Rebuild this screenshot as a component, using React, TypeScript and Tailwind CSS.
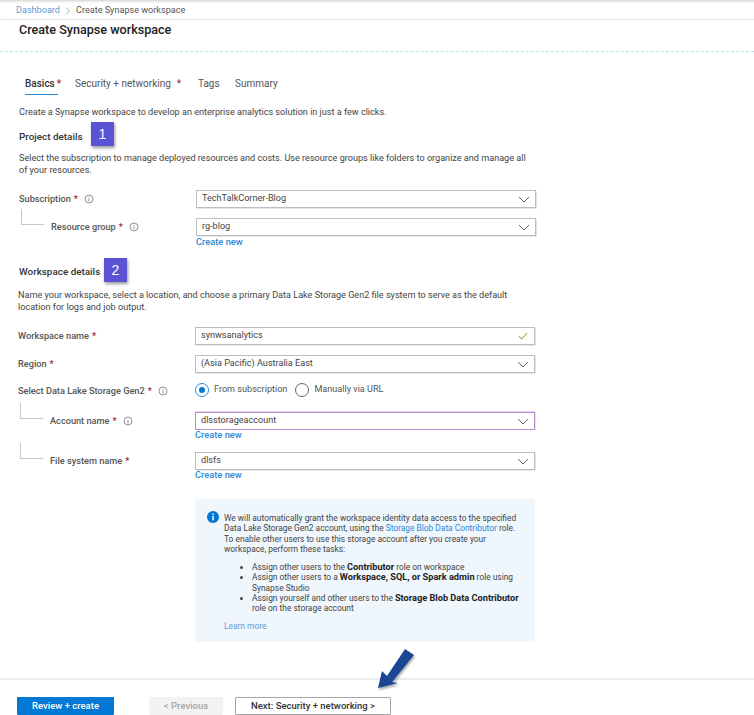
import React from "react";

const Chevron = () => (
  <svg width="12" height="7" viewBox="0 0 12 7" fill="none" className="shrink-0">
    <path d="M1 1l5 5 5-5" stroke="#555" strokeWidth="0.9" />
  </svg>
);

const Info = ({ className = "" }: { className?: string }) => (
  <svg width="10" height="10" viewBox="0 0 10 10" fill="none" className={className}>
    <circle cx="5" cy="5" r="4" stroke="#777" strokeWidth="0.8" />
    <path d="M5 4.4v3M5 2.6v.9" stroke="#777" strokeWidth="0.8" />
  </svg>
);

const Star = () => <span className="text-[#a4262c] ml-[3px]">*</span>;

function Select({ value, tone = "normal", icon = "chevron" }: { value: string; tone?: "normal" | "focus"; icon?: "chevron" | "check" }) {
  return (
    <div
      className={
        "w-[340px] h-[18px] flex items-center justify-between pl-[5px] pr-[5px] bg-white text-[9.1px] text-[#444] border " +
        (tone === "focus"
          ? "border-[#b78fcb] shadow-[0_-1px_0_#e8d5ee,1px_0_0_#efe3f3]"
          : "border-[#bdbdbd] shadow-[1px_1px_0_#e6e6e6]")
      }
    >
      <span>{value}</span>
      {icon === "chevron" ? (
        <Chevron />
      ) : (
        <svg width="10" height="8" viewBox="0 0 10 8" fill="none" className="mr-[1px]">
          <path d="M1 4l2.6 3L9 1" stroke="#8db34f" strokeWidth="1.1" />
        </svg>
      )}
    </div>
  );
}

const Tree = () => <div className="absolute left-[2px] top-[-9px] w-[23px] h-[16px] border-l border-b border-[#c8c8c8]" />;

function Row({ label, sub, info, children, top, left = 18 }: { label: string; sub?: boolean; info?: boolean; children: React.ReactNode; top: number; left?: number }) {
  return (
    <div className="flex items-center h-[18px]" style={{ marginTop: top, marginLeft: left }}>
      <div className="relative h-full flex items-center font-medium text-[9.2px] text-[#555] shrink-0" style={{ width: 195 - left }}>
        {sub && <Tree />}
        <span className={sub ? "ml-[32px]" : ""}>{label}</span>
        <Star />
        {info && <Info className="ml-[6px]" />}
      </div>
      {children}
    </div>
  );
}

const CreateNew = ({ top, left = 195 }: { top: number; left?: number }) => (
  <div className="text-[9.3px] leading-[12px] font-medium text-[#2b88d8]" style={{ marginTop: top, marginLeft: left }}>
    Create new
  </div>
);

const Badge = ({ n, className }: { n: string; className: string }) => (
  <div className={"absolute w-[23px] h-[24px] bg-[#5b53d6] text-white text-[14px] flex items-center justify-center shadow-[1px_2px_3px_rgba(0,0,0,0.4)] font-['Liberation_Sans',sans-serif] " + className}>
    {n}
  </div>
);

export default function App() {
  return (
    <div className="relative w-[754px] h-[715px] overflow-hidden bg-white font-['Roboto',sans-serif] text-[#444]">
      <header className="h-[20px] border-b border-[#e5e5e5] flex items-center pl-[16px] pt-[2px] text-[9.1px] shadow-[inset_0_3px_3px_-2px_rgba(0,0,0,0.2)]">
        <span className="text-[#5b9bd5]">Dashboard</span>
        <svg width="6" height="8" viewBox="0 0 6 8" fill="none" className="mx-[5px]">
          <path d="M1 .5L4.5 4 1 7.5" stroke="#999" strokeWidth="0.8" />
        </svg>
        <span className="text-[#555]">Create Synapse workspace</span>
      </header>

      <h1 className="ml-[19px] mt-0 h-[20px] leading-[20px] text-[12.6px] font-medium text-[#222]">Create Synapse workspace</h1>
      <div className="mt-[11px] border-t border-dashed border-[#b6e3ee]" />

      <nav className="flex ml-[25px] mt-[24px] h-[19px] text-[10px] text-[#555] relative">
        <div className="w-[50px] font-medium text-[#333]">
          Basics<span className="text-[#a4262c] ml-[2px]">*</span>
        </div>
        <div className="w-[123px]">
          Security + networking<span className="text-[#a4262c] ml-[6px]">*</span>
        </div>
        <div className="w-[37px]">Tags</div>
        <div>Summary</div>
        <div className="absolute left-0 top-[18px] w-[33px] h-[1px] bg-[#2b88d8]" />
      </nav>

      <p className="ml-[19px] mt-[9px] h-[16px] leading-[16px] text-[9.1px]">Create a Synapse workspace to develop an enterprise analytics solution in just a few clicks.</p>

      <h2 className="ml-[19px] mt-[9px] h-[16px] leading-[16px] text-[9.9px] font-medium text-[#333]">Project details</h2>
      <div className="ml-[19px] mt-[7px] w-[515px] text-[9.1px] leading-[12px]">
        Select the subscription to manage deployed resources and costs. Use resource groups like folders to organize and manage all of your resources.
      </div>

      <Row label="Subscription" info top={14} left={19}>
        <div className="ml-[1px]"><Select value="TechTalkCorner-Blog" /></div>
      </Row>
      <Row label="Resource group" sub info top={10} left={19}>
        <div className="ml-[1px]"><Select value="rg-blog" /></div>
      </Row>
      <CreateNew top={0} left={196} />

      <h2 className="ml-[19px] mt-[16px] h-[16px] leading-[16px] text-[9.9px] font-medium text-[#333]">Workspace details</h2>
      <div className="ml-[18px] mt-[9px] w-[515px] text-[9.1px] leading-[12px]">
        Name your workspace, select a location, and choose a primary Data Lake Storage Gen2 file system to serve as the default location for logs and job output.
      </div>

      <Row label="Workspace name" top={14}>
        <Select value="synwsanalytics" icon="check" />
      </Row>
      <Row label="Region" top={10}>
        <Select value="(Asia Pacific) Australia East" />
      </Row>
      <Row label="Select Data Lake Storage Gen2" info top={9}>
        <div className="flex items-center text-[9.1px] text-[#555] -mt-[3px]">
          <div className="w-[14px] h-[14px] rounded-full border border-[#2b88d8] flex items-center justify-center">
            <div className="w-[6px] h-[6px] rounded-full bg-[#0078d4]" />
          </div>
          <span className="ml-[5px]">From subscription</span>
          <div className="ml-[8px] w-[14px] h-[14px] rounded-full border border-[#666]" />
          <span className="ml-[5px]">Manually via URL</span>
        </div>
      </Row>
      <Row label="Account name" sub info top={12}>
        <Select value="dlsstorageaccount" tone="focus" />
      </Row>
      <CreateNew top={-1} />
      <Row label="File system name" sub top={11}>
        <Select value="dlsfs" />
      </Row>
      <CreateNew top={-1} />

      <section className="ml-[195px] mt-[18px] w-[340px] h-[143px] bg-[#eff6fc] flex pl-[12px] pt-[12px] text-[8.4px] leading-[10.3px] text-[#444]">
        <svg width="12" height="12" viewBox="0 0 12 12" className="shrink-0">
          <circle cx="6" cy="6" r="6" fill="#0078d4" />
          <rect x="5.3" y="5" width="1.5" height="4.4" fill="#fff" />
          <rect x="5.3" y="2.6" width="1.5" height="1.5" fill="#fff" />
        </svg>
        <div className="ml-[5px] mt-[2px] w-[298px]">
          <p>
            We will automatically grant the workspace identity data access to the specified Data Lake Storage Gen2 account, using the{" "}
            <span className="text-[#2b88d8]">Storage Blob Data Contributor</span> role. To enable other users to use this storage account after you create your workspace, perform these tasks:
          </p>
          <ul className="list-disc ml-[28px] mt-[8px] w-[272px]">
            <li>Assign other users to the <b className="text-[9.2px] text-[#222]">Contributor</b> role on workspace</li>
            <li>Assign other users to a <b className="text-[9.2px] text-[#222]">Workspace, SQL, or Spark admin</b> role using Synapse Studio</li>
            <li>Assign yourself and other users to the <b className="text-[9.2px] text-[#222]">Storage Blob Data Contributor</b> role on the storage account</li>
          </ul>
          <p className="mt-[7px] text-[#5b9bd5]">Learn more</p>
        </div>
      </section>

      <footer className="mt-[36px] border-t-2 border-[#ececec] h-[37px] flex items-start pt-[17px] pl-[17px] text-[9.5px] font-medium">
        <button className="w-[97px] h-[18px] bg-[#0078d4] text-white rounded-[1px]">Review + create</button>
        <button className="ml-[35px] w-[74px] h-[18px] bg-[#f3f2f1] text-[#a6a6a6] rounded-[1px]">&lt; Previous</button>
        <button className="ml-[12px] w-[156px] h-[18px] bg-white border border-[#a8a6a4] text-[#333] rounded-[1px]">Next: Security + networking &gt;</button>
      </footer>

      <Badge n="1" className="left-[91px] top-[122px]" />
      <Badge n="2" className="left-[104px] top-[258px]" />

      <svg className="absolute left-[370px] top-[645px] drop-shadow-[1px_2px_1px_rgba(0,0,0,0.35)]" width="50" height="50" viewBox="370 645 50 50">
        <path d="M378 688L382 671 387 676 405 649 414 655 392 682 398 683Z" fill="#1a4694" />
      </svg>
    </div>
  );
}
